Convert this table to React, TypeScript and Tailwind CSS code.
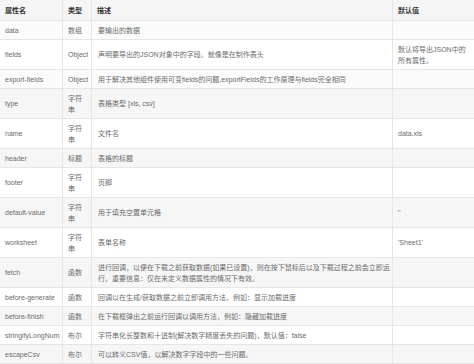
import React from 'react'

type Row = {
  name: string
  type: string
  desc: string
  def?: string
  bg: string
}

const rows: Row[] = [
  { name: 'data', type: '数组', desc: '要输出的数据', bg: 'bg-[#fbfbfb]' },
  {
    name: 'fields',
    type: 'Object',
    desc: '声明要导出的JSON对象中的字段。就像是在制作表头',
    def: '默认将导出JSON中的所有属性。',
    bg: 'bg-white',
  },
  {
    name: 'export-fields',
    type: 'Object',
    desc: '用于解决其他组件使用可变fields的问题,exportFields的工作原理与fields完全相同',
    bg: 'bg-[#fbfbfb]',
  },
  { name: 'type', type: '字符串', desc: '表格类型 [xls, csv]', bg: 'bg-[#f6f6f6]' },
  { name: 'name', type: '字符串', desc: '文件名', def: 'data.xls', bg: 'bg-white' },
  { name: 'header', type: '标题', desc: '表格的标题', bg: 'bg-[#f6f6f6]' },
  { name: 'footer', type: '字符串', desc: '页脚', bg: 'bg-white' },
  { name: 'default-value', type: '字符串', desc: '用于填充空置单元格', def: '"', bg: 'bg-[#f6f6f6]' },
  { name: 'worksheet', type: '字符串', desc: '表单名称', def: "'Sheet1'", bg: 'bg-white' },
  {
    name: 'fetch',
    type: '函数',
    desc: '进行回调，以便在下载之前获取数据(如果已设置)，则在按下鼠标后以及下载过程之前会立即运行。重要信息：仅在未定义数据属性的情况下有效。',
    bg: 'bg-[#f6f6f6]',
  },
  {
    name: 'before-generate',
    type: '函数',
    desc: '回调以在生成/获取数据之前立即调用方法，例如：显示加载进度',
    bg: 'bg-white',
  },
  {
    name: 'before-finish',
    type: '函数',
    desc: '在下载框弹出之前运行回调以调用方法，例如：隐藏加载进度',
    bg: 'bg-[#f6f6f6]',
  },
  {
    name: 'stringifyLongNum',
    type: '布尔',
    desc: '字符串化长整数和十进制(解决数字精度丢失的问题)，默认值：false',
    bg: 'bg-white',
  },
  {
    name: 'escapeCsv',
    type: '布尔',
    desc: '可以转义CSV值，以解决数字字段中的一些问题。',
    bg: 'bg-[#f6f6f6]',
  },
]

const cell = 'border border-[#e6e6e6] px-[5px] py-[3.5px] align-middle'

export default function App(): JSX.Element {
  return (
    <div className="w-[474px] h-[364px] overflow-hidden bg-white font-['Liberation_Sans','Noto_Sans_CJK_SC',sans-serif] text-[7px] leading-[11px]">
      <table className="table-fixed w-[475px] border-collapse -mt-px -ml-px">
        <colgroup>
          <col className="w-[63px]" />
          <col className="w-[29px]" />
          <col className="w-[301px]" />
          <col className="w-[82px]" />
        </colgroup>
        <thead>
          <tr className="bg-[#f5f5f5] text-[#333]">
            <th className={`${cell} py-[4.5px] text-left font-bold`}>属性名</th>
            <th className={`${cell} py-[4.5px] text-left font-bold`}>类型</th>
            <th className={`${cell} py-[4.5px] text-left font-bold`}>描述</th>
            <th className={`${cell} py-[4.5px] text-left font-bold`}>默认值</th>
          </tr>
        </thead>
        <tbody className="text-[#6b6b6b]">
          {rows.map((row) => (
            <tr key={row.name} className={row.bg}>
              <td className={`${cell} whitespace-nowrap`}>{row.name}</td>
              <td className={cell}>{row.type}</td>
              <td className={`${cell} pl-[6px] pr-[1px]`}>{row.desc}</td>
              <td className={cell}>{row.def ?? ''}</td>
            </tr>
          ))}
        </tbody>
      </table>
    </div>
  )
}
